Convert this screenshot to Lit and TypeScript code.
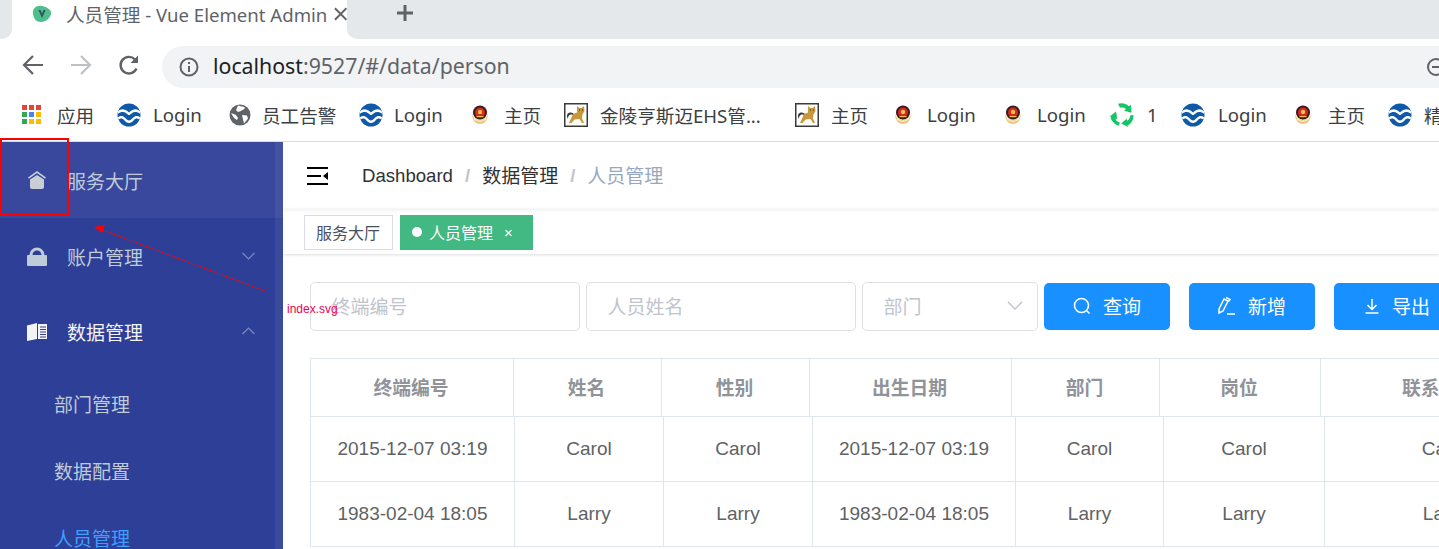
import { LitElement, html, css, svg } from "lit";
import { customElement } from "lit/decorators.js";

const wave = html`<svg class="bi" width="24" height="24" viewBox="0 0 24 24"><circle cx="12" cy="12" r="11.500" fill="#0f5aa8"/><path d="M1 8.500C4 5 8 6 12 9.500c4-3.500 8-4.500 11-1l.3 2.500C20 8.500 17 8.500 14.500 10.500 13.500 11.300 12.700 12 12 12s-1.500-.7-2.500-1.500C7 8.500 4 8.500.7 11z" fill="#fff"/><path d="M.8 14.500c2.700-2.300 5-1.800 7.200.2 1.500 1.500 2.800 2.800 4 2.800s2.500-1.300 4-2.800c2.200-2 4.500-2.500 7.200-.2l-.8 2c-2.200-1.500-4-1-5.400.5-1.600 1.700-3.300 3-5 3s-3.400-1.300-5-3C5.600 15.500 3.800 15 1.600 16.500z" fill="#fff"/></svg>`;
const gov = html`<svg class="bi" width="20" height="22" viewBox="0 0 20 22"><path d="M2.500 10C1.500 16 5.500 20 10 20s8.500-4 7.500-10l-2 6-5.500 2-5.500-2z" fill="#e9c77e"/><path d="M4 13c1 3 3.500 4.500 6 4.500s5-1.500 6-4.500l-1-2H5z" fill="#f1dca8"/><circle cx="10" cy="8.500" r="7" fill="#3a1a22"/><circle cx="10" cy="8.500" r="5" fill="#d8281c"/><circle cx="10" cy="8" r="2.200" fill="#f0c24f"/><path d="M6.500 12h7v1.200h-7z" fill="#f0c24f"/></svg>`;
const cat = html`<svg class="bi" width="24" height="24" viewBox="0 0 24 24"><rect x=".75" y=".75" width="22.500" height="22.500" fill="#fff" stroke="#3a3a3a" stroke-width="1.500"/><path d="M13 3l2.500 2h2L20 3l.5 5-2 3.500-.5 4 2 4.500h-2l-2.500-4-5 .5-3 3.500H5l2.500-5.500L9 11l4-1.500z" fill="#c9983c"/><path d="M9.500 10.500C7 9 5 9 3.500 11c-1 1.500-.5 3.500.5 5 0-2 .5-3.500 2-4.200 1-.4 2-.2 3 .2z" fill="#3a3a3a"/><path d="M15 6.500h1v1h-1zM18 6.500h1v1h-1z" fill="#3a2a10"/></svg>`;
const ring = html`<svg class="bi" width="24" height="24" viewBox="0 0 24 24" fill="#17c568"><path d="M8 .8c4-1.300 8-.5 11 2.500l2-1.500.5 8-7.500-2 2-1.800c-2-1.500-4-1.800-6-1.200z"/><path d="M23.500 12c.2 4.500-2 8.500-6 10.500l.6 1.500-7-3.500 5.500-4.700.5 2c2.200-1.200 3-3 3-5.300z"/><path d="M9 22.800C4.500 21.500 1 18 .5 13.500L0 13.200l6-4.700 1.300 7.500-2-.6c.8 2.200 2.300 3.500 4.500 4.200z"/></svg>`;
const globe = html`<svg class="bi" width="22" height="22" viewBox="0 0 22 22"><circle cx="11" cy="11" r="10.500" fill="#5f6368"/><path d="M9 1.500c2 1 6 .5 7 2.500-1 2-3 1.500-4 3l-3 1-2-2zM13 11l5 .5 1 3-4 5-1-4zM2 9l5 2 2 3-1 2-3-2z" fill="#fff"/></svg>`;
const apps = html`<svg class="bi" width="20" height="20" viewBox="0 0 20 20">${[
  [0, 0, "#ea4335"], [7, 0, "#ea4335"], [14, 0, "#ea4335"],
  [0, 7, "#34a853"], [7, 7, "#4285f4"], [14, 7, "#fbbc05"],
  [0, 14, "#34a853"], [7, 14, "#fbbc05"], [14, 14, "#fbbc05"],
].map(([x, y, c]) => svg`<rect x=${x} y=${y} width="5" height="5" fill=${c}/>`)}</svg>`;

const marks: [unknown, string, number, number][] = [
  [apps, "应用", 95, 15],
  [wave, "Login", 112, 12],
  [globe, "员工告警", 130, 11],
  [wave, "Login", 111, 11],
  [gov, "主页", 94, 14],
  [cat, "金陵亨斯迈EHS管...", 231, 12],
  [cat, "主页", 98, 12],
  [gov, "Login", 110, 14],
  [gov, "Login", 107, 14],
  [ring, "1", 71, 13],
  [wave, "Login", 112, 13],
  [gov, "主页", 95, 15],
  [wave, "精", 80, 12],
];

const headCols = [
  ["终端编号", 203], ["姓名", 148], ["性别", 148], ["出生日期", 202],
  ["部门", 148], ["岗位", 161], ["联系电话", 240],
] as [string, number][];
const bodyW = [204, 149, 149, 203, 148, 161, 240];
const rows = [
  ["2015-12-07 03:19", "Carol", "Carol", "2015-12-07 03:19", "Carol", "Carol", "Carol"],
  ["1983-02-04 18:05", "Larry", "Larry", "1983-02-04 18:05", "Larry", "Larry", "Larry"],
];

@customElement("app-root")
export class AppRoot extends LitElement {
  static styles = css`
    :host { display: block; position: relative; width: 1439px; height: 549px; overflow: hidden; background: #fff; font-family: "Liberation Sans", "Noto Sans CJK SC", sans-serif; }
    .cjk { font-family: "Noto Sans CJK SC", sans-serif; }
    .tabstrip { display: flex; height: 39px; background: #fff; }
    .tab-gap { width: 12px; background: #e5e8eb; border-bottom-right-radius: 10px; }
    .tab { width: 335px; display: flex; align-items: center; color: #5f6368; font: 18.600px "Noto Sans", "Noto Sans CJK SC", sans-serif; box-sizing: border-box; padding: 0 0 12px 20px; }
    .tab .title { margin-left: 14px; width: 280px; white-space: nowrap; }
    .tab-rest { flex: 1; background: #e5e8eb; border-bottom-left-radius: 10px; display: flex; align-items: center; padding: 0 0 13px 49px; }
    .toolbar { height: 51px; display: flex; align-items: center; box-sizing: border-box; padding: 1px 0 0 22px; }
    .nav { display: flex; width: 140px; gap: 26px; }
    .omni { flex: 1; height: 42px; background: #f1f3f4; border-radius: 21px 0 0 21px; display: flex; align-items: center; padding-left: 17px; position: relative; margin-top: 4px; }
    .url { margin-left: 14px; font: 21.300px/1 "Noto Sans", sans-serif; color: #5f6368; position: relative; top: -1px; }
    .url b { font-weight: 400; color: #202124; }
    .zoomi { margin-left: auto; margin-right: -7px; }
    .marks { height: 52px; display: flex; align-items: center; padding: 0 0 2px 22px; box-sizing: border-box; border-bottom: 1px solid #d9dbe0; white-space: nowrap; overflow: hidden; }
    .mark { display: flex; align-items: center; flex: none; font: 18.600px "Noto Sans", "Noto Sans CJK SC", sans-serif; color: #3c4043; }
    .bi { flex: none; }
    .main { display: flex; height: 407px; }
    aside { width: 283px; flex: none; background: #2e3f97; overflow: hidden; position: relative; font: 19px/1 "Noto Sans CJK SC", sans-serif; color: #bfcbd9; }
    aside::after { content: ""; position: absolute; top: 0; right: 0; bottom: 0; width: 8px; background: rgba(255,255,255,.06); }
    .item { height: 76px; display: flex; align-items: center; padding: 0 28px 0 26px; box-sizing: border-box; }
    .item.on { background: #39489d; }
    .item .ic { width: 21px; display: flex; justify-content: center; margin-right: 20px; }
    .item .lb { flex: 1; }
    .item.open { color: #f4f4f5; padding-bottom: 2px; }
    .sub { height: 67px; display: flex; align-items: center; padding-left: 54px; }
    .sub.cur { color: #409eff; }
    .content { flex: 1; min-width: 0; overflow: hidden; }
    .head { height: 67px; display: flex; align-items: center; padding-left: 24px; box-shadow: 0 1px 4px rgba(0,21,41,.08); position: relative; }
    .crumb { margin-left: 34px; font-size: 18.600px; line-height: 24px; color: #303133; display: flex; align-items: center; }
    .crumb .cjk { font-size: 19px; position: relative; top: -1px; }
    .crumb .sep { color: #c0c4cc; font-weight: 700; margin: 0 12px; }
    .crumb .cur { color: #97a8be; }
    .tags { height: 45px; display: flex; gap: 7px; padding: 6px 0 0 21px; box-sizing: border-box; box-shadow: 0 1px 3px rgba(0,0,0,.12), 0 0 3px rgba(0,0,0,.04); position: relative; }
    .tag { height: 35px; box-sizing: border-box; display: flex; align-items: center; font: 16px "Noto Sans CJK SC", sans-serif; padding: 0 11px 1px; border: 1px solid #d8dce5; color: #495060; width: 89px; }
    .tag.act { background: #42b983; border-color: #42b983; color: #fff; width: 133px; }
    .dot { width: 10px; height: 10px; border-radius: 50%; background: #fff; margin-right: 7px; flex: none; }
    .x { margin-left: 11px; font: 15px "Liberation Sans", sans-serif; }
    .filters { display: flex; gap: 6px; padding: 28px 0 0 27px; align-items: center; }
    .inp { height: 49px; box-sizing: border-box; border: 1px solid #dcdfe6; border-radius: 5px; display: flex; align-items: center; padding: 0 0 2px 20.500px; color: #c0c4cc; font: 19px "Noto Sans CJK SC", sans-serif; flex: none; }
    .w270 { width: 270px; }
    .sel { width: 176px; position: relative; }
    .sel svg { position: absolute; right: 14px; top: 18px; }
    .btn { height: 47px; width: 126px; flex: none; background: #1890ff; color: #fff; border-radius: 5px; display: flex; align-items: center; justify-content: center; gap: 12px; padding-bottom: 2px; box-sizing: border-box; font: 19px "Noto Sans CJK SC", sans-serif; }
    .b2, .b3 { margin-left: 13px; }
    .table { margin: 27px 0 0 27px; width: 1300px; border-top: 1px solid #dfe6ec; border-left: 1px solid #dfe6ec; }
    .tr { display: flex; border-bottom: 1px solid #dfe6ec; }
    .cell { flex: none; box-sizing: border-box; display: flex; align-items: center; justify-content: center; border-right: 1px solid #dfe6ec; font-size: 19px; color: #606266; height: 64px; white-space: nowrap; }
    .th { height: 57px; padding: 0 2px 2px 0; font: 700 18.800px "Noto Sans CJK SC", sans-serif; color: #909399; }
    .overlay { position: absolute; left: 0; top: 0; pointer-events: none; }
    .redbox { position: absolute; left: 0; top: 138px; width: 69px; height: 77px; box-sizing: border-box; border: 2px solid #f00; }
    .note { position: absolute; left: 287px; top: 302px; font: 12px "Liberation Sans", sans-serif; color: #f0004f; }
  `;

  render() {
    return html`
      <div class="tabstrip">
        <div class="tab-gap"></div>
        <div class="tab">
          <svg class="bi" width="20" height="18" viewBox="0 0 20 18"><path d="M1 9C0 3 5 0 10 1s10 4 9 8-5 8-10 8-7-3-8-8z" fill="#4dbf8d"/><path d="M6.500 5l3.500 8 3.500-8h-2L10 9 8.500 5z" fill="#35495e"/></svg>
          <span class="title">人员管理 - Vue Element Admin</span>
          <svg width="14" height="14" viewBox="0 0 14 14" stroke="#5f6368" stroke-width="2"><path d="M1 1l12 12M13 1L1 13"/></svg>
        </div>
        <div class="tab-rest">
          <svg width="18" height="18" viewBox="0 0 18 18" stroke="#5f6368" stroke-width="3"><path d="M9 1v16M1 9h16"/></svg>
        </div>
      </div>
      <div class="toolbar">
        <div class="nav">
          <svg width="22" height="22" viewBox="0 0 22 22" fill="none" stroke="#5f6368" stroke-width="2.200"><path d="M21 11H3M11 2l-9 9 9 9"/></svg>
          <svg width="22" height="22" viewBox="0 0 22 22" fill="none" stroke="#bdc1c6" stroke-width="2.200"><path d="M1 11h18M11 2l9 9-9 9"/></svg>
          <svg width="22" height="22" viewBox="0 0 22 22" fill="none" stroke="#5f6368" stroke-width="2.400"><path d="M18.500 14.500A8.300 8.300 0 1 1 17 5.500"/><path d="M20 1.500V9h-7.500z" fill="#5f6368" stroke="none"/></svg>
        </div>
        <div class="omni">
          <svg width="20" height="20" viewBox="0 0 20 20" fill="none" stroke="#5f6368" stroke-width="2"><circle cx="10" cy="10" r="8.500"/><path d="M10 9v6M10 5v2"/></svg>
          <span class="url"><b>localhost</b>:9527/#/data/person</span>
          <svg class="zoomi" width="20" height="20" viewBox="0 0 20 20" fill="none" stroke="#5f6368" stroke-width="2"><circle cx="10" cy="10" r="8"/><path d="M6 10h8"/></svg>
        </div>
      </div>
      <div class="marks">
        ${marks.map(([ic, t, w, g]) => html`<div class="mark" style="width:${w}px">${ic}<span style="margin-left:${g}px">${t}</span></div>`)}
      </div>
      <div class="main">
        <aside>
          <div class="item on">
            <span class="ic"><svg width="18" height="18" viewBox="0 0 18 18" fill="#c9cdd6"><path d="M9 0l9 6.500-1 1.300L9 2 1 7.800 0 6.500z"/><path d="M9 4l7 4.500V16a2 2 0 0 1-2 2H4a2 2 0 0 1-2-2V8.500z"/></svg></span>
            <span class="lb">服务大厅</span>
          </div>
          <div class="item">
            <span class="ic"><svg width="20" height="19" viewBox="0 0 20 19" fill="#bfcbd9"><path d="M2.500 9V8a7.500 7.500 0 0 1 15 0v1h-3V8a4.500 4.500 0 0 0-9 0v1z"/><rect y="8" width="20" height="11" rx="1"/></svg></span>
            <span class="lb">账户管理</span>
            <svg width="13" height="8" viewBox="0 0 13 8" fill="none" stroke="#7f89bd" stroke-width="1.200"><path d="M.5 1l6 6 6-6"/></svg>
          </div>
          <div class="item open">
            <span class="ic"><svg width="20" height="19" viewBox="0 0 20 19"><path d="M10 1L0 3.500V19l10-2z" fill="#f4f4f5"/><path d="M11 2h9v15h-9z" fill="#f4f4f5"/><path d="M13 5h6M13 7.500h6M13 10h6M13 12.500h6M13 15h6" stroke="#2e3f97"/></svg></span>
            <span class="lb">数据管理</span>
            <svg width="13" height="8" viewBox="0 0 13 8" fill="none" stroke="#7f89bd" stroke-width="1.200"><path d="M.5 7l6-6 6 6"/></svg>
          </div>
          <div class="sub">部门管理</div>
          <div class="sub">数据配置</div>
          <div class="sub cur">人员管理</div>
        </aside>
        <div class="content">
          <div class="head">
            <svg width="21" height="18" viewBox="0 0 21 18" fill="#000"><path d="M0 0h21v2H0zM0 8h14v2H0zM0 16h21v2H0zM21 5v8l-5-4z"/></svg>
            <div class="crumb"><span>Dashboard</span><span class="sep">/</span><span class="cjk">数据管理</span><span class="sep">/</span><span class="cur cjk">人员管理</span></div>
          </div>
          <div class="tags">
            <div class="tag">服务大厅</div>
            <div class="tag act"><span class="dot"></span>人员管理<span class="x">×</span></div>
          </div>
          <div class="filters">
            <div class="inp w270">终端编号</div>
            <div class="inp w270">人员姓名</div>
            <div class="inp sel">部门<svg width="16" height="10" viewBox="0 0 16 10" fill="none" stroke="#c0c4cc" stroke-width="1.500"><path d="M1 1l7 7 7-7"/></svg></div>
            <div class="btn"><svg width="18" height="18" viewBox="0 0 18 18" fill="none" stroke="#fff" stroke-width="1.600"><circle cx="8.500" cy="8.500" r="7"/><path d="M13.500 13.500l3 3"/></svg>查询</div>
            <div class="btn b2"><svg width="18" height="19" viewBox="0 0 18 19" fill="none" stroke="#fff" stroke-width="1.500"><path d="M6 3l4 2-5 10-4 2v-4zM8 1.500l4 2-1.500 2M9 18h8"/></svg>新增</div>
            <div class="btn b3"><svg width="16" height="16" viewBox="0 0 16 16" fill="none" stroke="#fff" stroke-width="1.500"><path d="M8 1v10M3.500 7L8 11.500 12.500 7M1.500 15h13"/></svg>导出</div>
          </div>
          <div class="table">
            <div class="tr">${headCols.map(([t, w]) => html`<div class="cell th" style="width:${w}px">${t}</div>`)}</div>
            ${rows.map((r) => html`<div class="tr">${r.map((c, i) => html`<div class="cell" style="width:${bodyW[i]}px">${c}</div>`)}</div>`)}
          </div>
        </div>
      </div>
      <div class="redbox"></div>
      <svg class="overlay" width="300" height="320" viewBox="0 0 300 320"><path d="M265 291L100 229" stroke="#f00" fill="none" stroke-dasharray="3 1"/><path d="M94 227l11-2-3 8z" fill="#f00"/></svg>
      <div class="note">index.svg</div>
    `;
  }
}
